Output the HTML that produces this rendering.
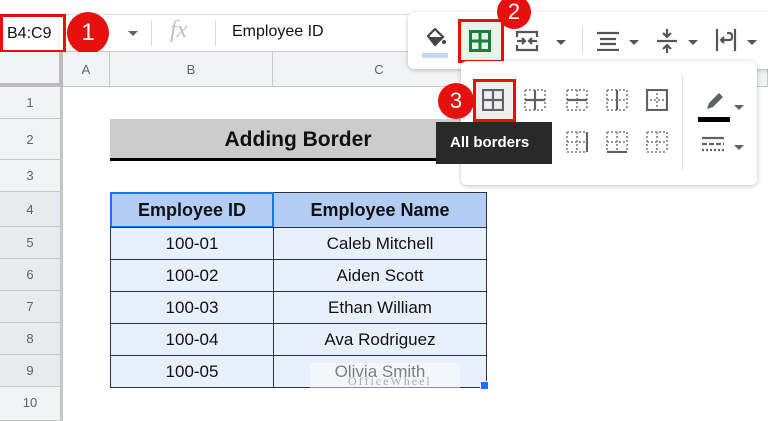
<!DOCTYPE html>
<html><head><style>
*{margin:0;padding:0;box-sizing:border-box}
body{width:768px;height:421px;overflow:hidden;background:#fff;font-family:"Liberation Sans",Arial,sans-serif;position:relative}
.a{position:absolute}
.rh{position:absolute;left:0;width:63px;background:#f1f3f4;border-bottom:1px solid #c4c7c5;border-right:3px solid #c4c7c5;color:#5f6368;font-size:13px;text-align:center}
.ch{position:absolute;top:52px;height:35px;background:#f1f3f4;border-right:1px solid #c4c7c5;border-bottom:1px solid #c4c7c5;color:#5f6368;font-size:13px;text-align:center;line-height:35px}
.cell{position:absolute;background:#e8f0fe;border:1px solid #2b3440;font-size:17px;color:#111;text-align:center}
.circ{position:absolute;border-radius:50%;background:#e8100f;color:#fff;font-size:24px;text-align:center}
.ic{position:absolute}
</style></head><body>
<!-- top area -->
<div class="a" style="left:0;top:14px;width:768px;height:1px;background:#dadce0"></div>
<div class="a" style="left:0;top:51px;width:768px;height:1px;background:#c4c7c5"></div>
<div class="a" style="left:0;top:14px;width:66px;height:39px;border:3px solid #e8100f;font-size:16px;line-height:34px;padding-left:4px;color:#111">B4:C9</div>
<div class="circ" style="left:67px;top:12px;width:42px;height:42px;line-height:42px">1</div>
<div class="a" style="left:128px;top:31px;border-left:5px solid transparent;border-right:5px solid transparent;border-top:5px solid #5f6368"></div>
<div class="a" style="left:151px;top:20px;width:1px;height:26px;background:#dadce0"></div>
<div class="a" style="left:170px;top:17px;font-family:'Liberation Serif',serif;font-style:italic;font-size:24px;color:#bdc1c6">fx</div>
<div class="a" style="left:215px;top:20px;width:1px;height:26px;background:#dadce0"></div>
<div class="a" style="left:232px;top:23px;font-size:16px;color:#111">Employee ID</div>
<!-- headers -->
<div class="a" style="left:0;top:52px;width:63px;height:35px;background:#f1f3f4;border-right:4px solid #bdbdbd;border-bottom:4px solid #bdbdbd"></div>
<div class="ch" style="left:63px;width:47px">A</div>
<div class="ch" style="left:110px;width:163px">B</div>
<div class="ch" style="left:273px;width:213px">C</div>
<div class="ch" style="left:486px;width:282px"></div>
<div class="rh" style="top:87px;height:32px;line-height:32px">1</div>
<div class="rh" style="top:119px;height:41px;line-height:41px">2</div>
<div class="rh" style="top:160px;height:32px;line-height:32px">3</div>
<div class="rh" style="top:192px;height:35px;line-height:35px;background:#e8eaed">4</div>
<div class="rh" style="top:227px;height:32px;line-height:32px;background:#e8eaed">5</div>
<div class="rh" style="top:259px;height:32px;line-height:32px;background:#e8eaed">6</div>
<div class="rh" style="top:291px;height:32px;line-height:32px;background:#e8eaed">7</div>
<div class="rh" style="top:323px;height:32px;line-height:32px;background:#e8eaed">8</div>
<div class="rh" style="top:355px;height:32px;line-height:32px;background:#e8eaed">9</div>
<div class="rh" style="top:387px;height:34px;line-height:32px">10</div>
<!-- title -->
<div class="a" style="left:110px;top:119px;width:376px;height:39px;background:#cccccc;font-weight:bold;font-size:21px;text-align:center;line-height:41px;color:#111">Adding Border</div>
<div class="a" style="left:110px;top:158px;width:376px;height:3px;background:#000"></div>
<!-- table -->
<div class="cell" style="left:110px;top:192px;width:164px;height:36px;background:#b4cdf5;font-weight:bold;font-size:18px;line-height:34px">Employee ID</div>
<div class="cell" style="left:273px;top:192px;width:214px;height:36px;background:#b4cdf5;font-weight:bold;font-size:18px;line-height:34px">Employee Name</div>
<div class="a" style="left:110px;top:192px;width:164px;height:36px;border:2px solid #1a73e8"></div>
<div class="cell" style="left:110px;top:227px;width:164px;height:33px;line-height:31px">100-01</div>
<div class="cell" style="left:273px;top:227px;width:214px;height:33px;line-height:31px">Caleb Mitchell</div>
<div class="cell" style="left:110px;top:259px;width:164px;height:33px;line-height:31px">100-02</div>
<div class="cell" style="left:273px;top:259px;width:214px;height:33px;line-height:31px">Aiden Scott</div>
<div class="cell" style="left:110px;top:291px;width:164px;height:33px;line-height:31px">100-03</div>
<div class="cell" style="left:273px;top:291px;width:214px;height:33px;line-height:31px">Ethan William</div>
<div class="cell" style="left:110px;top:323px;width:164px;height:33px;line-height:31px">100-04</div>
<div class="cell" style="left:273px;top:323px;width:214px;height:33px;line-height:31px">Ava Rodriguez</div>
<div class="cell" style="left:110px;top:355px;width:164px;height:33px;line-height:31px">100-05</div>
<div class="cell" style="left:273px;top:355px;width:214px;height:33px;line-height:31px">Olivia Smith</div>
<div class="a" style="left:310px;top:363px;width:150px;height:30px;background:rgba(255,255,255,0.45)"></div>
<div class="a" style="left:348px;top:374px;font-size:12px;letter-spacing:2px;color:#aaa;font-family:'Liberation Serif',serif">OfficeWheel</div>
<div class="a" style="left:480px;top:381px;width:9px;height:9px;background:#1a73e8;border:1px solid #fff"></div>
<!-- popup 1 -->
<div class="a" style="left:408px;top:12px;width:370px;height:57px;background:#fff;border-radius:6px;box-shadow:0 1px 4px rgba(0,0,0,0.25)"></div>
<svg class="ic" style="left:422px;top:28px" width="26" height="30" viewBox="0 0 26 30"><path d="M6 8 L13 1 L21 9 L13 17 Z" fill="none" stroke="#444" stroke-width="2.2"/><path d="M6 9 L20 9 L13 16Z" fill="#444"/><circle cx="22" cy="14" r="2" fill="#444"/><rect x="0" y="25" width="26" height="5" fill="#c6d6f5"/></svg>
<div class="a" style="left:458px;top:19px;width:46px;height:44px;border:3px solid #e8100f;background:#e6f4ea"></div>
<svg class="ic" style="left:469px;top:30px" width="22" height="22" viewBox="0 0 22 22"><rect x="1.5" y="1.5" width="19" height="19" fill="none" stroke="#188038" stroke-width="3"/><path d="M11 1V21M1 11H21" stroke="#188038" stroke-width="3"/></svg>
<div class="circ" style="left:497px;top:-5px;width:34px;height:34px;line-height:34px;font-size:22px">2</div>
<svg class="ic" style="left:515px;top:30px" width="24" height="22" viewBox="0 0 24 22"><path d="M2 7V2H22V7M2 15V20H22V15M2 11H9M15 11H22M7 8L10 11L7 14M17 8L14 11L17 14" fill="none" stroke="#555" stroke-width="2.2"/></svg>
<div class="a" style="left:556px;top:40px;border-left:5px solid transparent;border-right:5px solid transparent;border-top:5px solid #555"></div>
<div class="a" style="left:582px;top:26px;width:1px;height:28px;background:#dadce0"></div>
<svg class="ic" style="left:597px;top:31px" width="22" height="20" viewBox="0 0 22 20"><path d="M0 2H22M3 8H19M3 13H19M0 19H22" stroke="#555" stroke-width="2.2"/></svg>
<div class="a" style="left:629px;top:40px;border-left:5px solid transparent;border-right:5px solid transparent;border-top:5px solid #555"></div>
<svg class="ic" style="left:657px;top:28px" width="20" height="26" viewBox="0 0 20 26"><path d="M0 13H20M10 1V9M6 5L10 9L14 5M10 25V17M6 21L10 17L14 21" fill="none" stroke="#555" stroke-width="2.2"/></svg>
<div class="a" style="left:688px;top:40px;border-left:5px solid transparent;border-right:5px solid transparent;border-top:5px solid #555"></div>
<svg class="ic" style="left:715px;top:28px" width="22" height="24" viewBox="0 0 22 24"><path d="M2 1V23M20 1V23M6 12H15Q17 12 17 8Q17 5 14 5H12M9 9L6 12L9 15" fill="none" stroke="#555" stroke-width="2.2"/></svg>
<div class="a" style="left:747px;top:40px;border-left:5px solid transparent;border-right:5px solid transparent;border-top:5px solid #555"></div>
<!-- popup 2 -->
<div class="a" style="left:461px;top:61px;width:296px;height:124px;background:#fff;border-radius:6px;box-shadow:0 1px 5px rgba(0,0,0,0.25)"></div>
<div class="a" style="left:473px;top:79px;width:43px;height:43px;border:3px solid #e8100f;background:#eee"></div>
<svg class="ic" style="left:482px;top:89px" width="22" height="22" viewBox="0 0 22 22"><rect x="1" y="1" width="20" height="20" fill="none" stroke="#5f6368" stroke-width="2.2"/><path d="M11 1V21M1 11H21" stroke="#5f6368" stroke-width="2.2"/></svg>
<div class="circ" style="left:438px;top:83px;width:36px;height:36px;line-height:36px;font-size:22px">3</div>
<svg class="ic" style="left:524px;top:89px" width="22" height="22" viewBox="0 0 22 22"><path d="M1 1H21M1 21H21M1 1V21M21 1V21" stroke="#999" stroke-width="2" stroke-dasharray="2 2"/><path d="M11 1V21M1 11H21" stroke="#5f6368" stroke-width="2.2"/></svg>
<svg class="ic" style="left:566px;top:89px" width="22" height="22" viewBox="0 0 22 22"><path d="M1 1H21M1 21H21M1 1V21M21 1V21M11 1V21" stroke="#999" stroke-width="2" stroke-dasharray="2 2"/><path d="M1 11H21" stroke="#5f6368" stroke-width="2.2"/></svg>
<svg class="ic" style="left:606px;top:89px" width="22" height="22" viewBox="0 0 22 22"><path d="M1 1H21M1 21H21M1 1V21M21 1V21M1 11H21" stroke="#999" stroke-width="2" stroke-dasharray="2 2"/><path d="M11 1V21" stroke="#5f6368" stroke-width="2.2"/></svg>
<svg class="ic" style="left:646px;top:89px" width="22" height="22" viewBox="0 0 22 22"><path d="M11 4V18M4 11H18" stroke="#999" stroke-width="2" stroke-dasharray="2 2"/><rect x="1" y="1" width="20" height="20" fill="none" stroke="#5f6368" stroke-width="2.2"/></svg>
<svg class="ic" style="left:566px;top:131px" width="22" height="22" viewBox="0 0 22 22"><path d="M1 1H21M1 21H21M1 1V21M11 1V21M1 11H21" stroke="#999" stroke-width="2" stroke-dasharray="2 2"/><path d="M21 1V21" stroke="#5f6368" stroke-width="2.2"/></svg>
<svg class="ic" style="left:606px;top:131px" width="22" height="22" viewBox="0 0 22 22"><path d="M1 1H21M1 1V21M21 1V21M11 1V21M1 11H21" stroke="#999" stroke-width="2" stroke-dasharray="2 2"/><path d="M1 21H21" stroke="#5f6368" stroke-width="2.2"/></svg>
<svg class="ic" style="left:646px;top:131px" width="22" height="22" viewBox="0 0 22 22"><path d="M1 1H21M1 21H21M1 1V21M21 1V21M11 1V21M1 11H21" stroke="#999" stroke-width="2" stroke-dasharray="2 2"/></svg>
<div class="a" style="left:682px;top:76px;width:1px;height:94px;background:#e0e0e0"></div>
<svg class="ic" style="left:704px;top:90px" width="22" height="22" viewBox="0 0 22 22"><path d="M3 19L5 13L15 3L19 7L9 17Z" fill="#5f6368"/></svg>
<div class="a" style="left:698px;top:117px;width:32px;height:5px;background:#000"></div>
<div class="a" style="left:734px;top:105px;border-left:5px solid transparent;border-right:5px solid transparent;border-top:5px solid #5f6368"></div>
<svg class="ic" style="left:702px;top:136px" width="22" height="16" viewBox="0 0 22 16"><path d="M0 2H22" stroke="#5f6368" stroke-width="2.2"/><path d="M0 8H22" stroke="#5f6368" stroke-width="2.2" stroke-dasharray="5 2"/><path d="M0 14H22" stroke="#5f6368" stroke-width="2.2" stroke-dasharray="2 2"/></svg>
<div class="a" style="left:734px;top:145px;border-left:5px solid transparent;border-right:5px solid transparent;border-top:5px solid #5f6368"></div>
<!-- tooltip -->
<div class="a" style="left:436px;top:122px;width:116px;height:42px;background:#292929;color:#fff;font-weight:bold;font-size:15px;line-height:42px;padding-left:14px">All borders</div>
</body></html>
